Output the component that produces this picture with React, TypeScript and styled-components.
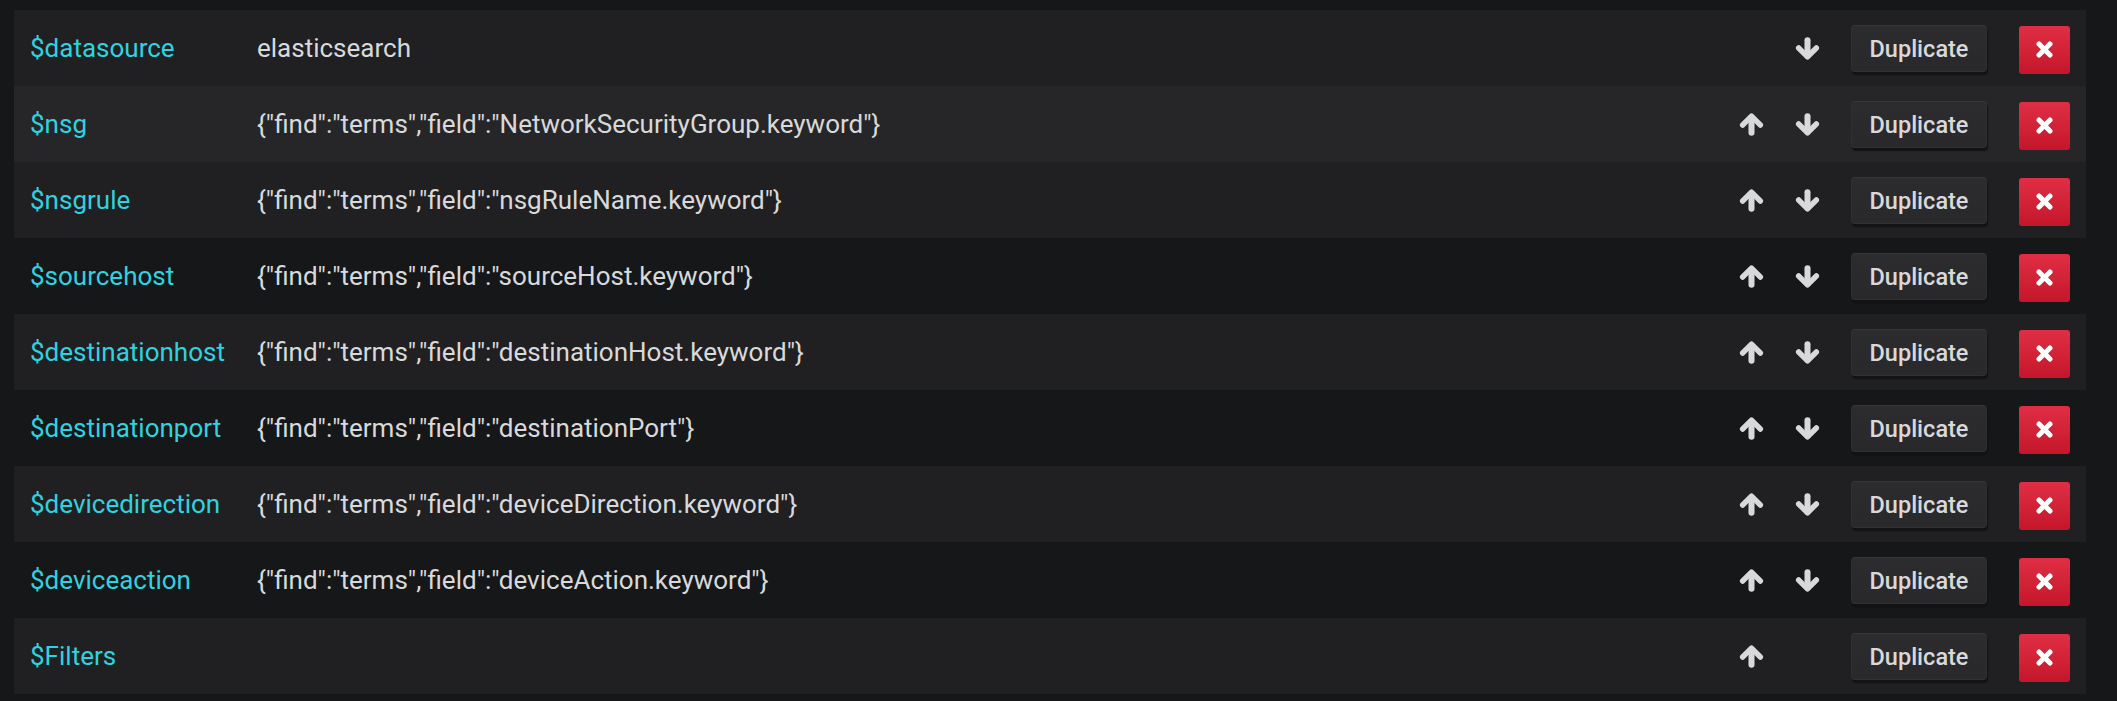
import React from "react";
import styled, { createGlobalStyle } from "styled-components";

const GlobalStyle = createGlobalStyle`
  html, body {
    margin: 0;
    padding: 0;
    background: #161719;
  }
  body {
    font-family: Roboto, "Noto Sans", "Liberation Sans", sans-serif;
    color: #d8d9da;
  }
`;

const Page = styled.div`
  background: #161719;
  padding: 10px 31px 7px 14px;
  min-height: 701px;
  box-sizing: border-box;
`;

const Table = styled.div`
  display: flex;
  flex-direction: column;
`;

const Row = styled.div<{ $striped: boolean; $hover?: boolean }>`
  display: grid;
  grid-template-columns: 227px 1fr 57px 55px 168px 83px;
  align-items: center;
  height: 76px;
  background: ${(p) => (p.$hover ? "#262628" : p.$striped ? "#202022" : "transparent")};
`;

const NameCell = styled.div`
  padding-left: 16px;
  font-size: 26px;
  color: #32d1df;
  white-space: nowrap;
`;

const ValueCell = styled.div`
  padding-left: 16px;
  font-size: 26px;
  color: #d8d9da;
  white-space: nowrap;
  overflow: hidden;
`;

const IconCell = styled.div`
  display: flex;
  align-items: center;
  justify-content: center;
  color: #d8d9da;
`;

const ButtonCell = styled.div`
  display: flex;
  align-items: center;
  padding-left: 16px;
`;

const DuplicateButton = styled.button`
  box-sizing: border-box;
  width: 136px;
  height: 47px;
  margin-top: 1px;
  border-radius: 4px;
  border: 1px solid #303034;
  border-top-color: #37373b;
  background: linear-gradient(to bottom, #2c2c2f, #29292c);
  box-shadow: 1px 3px 1px #121214;
  color: #d8d9da;
  font-family: Roboto, "Noto Sans", sans-serif;
  font-weight: 500;
  font-size: 23.5px;
  padding: 0;
  display: flex;
  align-items: center;
  justify-content: center;
`;

const DeleteButton = styled.button`
  box-sizing: border-box;
  width: 51px;
  height: 48px;
  margin-top: 3px;
  border: none;
  border-radius: 3px;
  background: linear-gradient(to bottom, #e02f44, #c4162a);
  display: flex;
  align-items: center;
  justify-content: center;
  padding: 0;
`;

const Arrow = ({ dir }: { dir: "up" | "down" }) => (
  <svg
    width="25"
    height="23"
    viewBox="0 0 24 22"
    style={{ transform: dir === "down" ? "rotate(180deg)" : undefined }}
  >
    <g fill="none" stroke="#d8d9da" strokeLinecap="round" strokeLinejoin="round">
      <polyline points="3.5,11.5 12,3 20.5,11.5" strokeWidth="5.2" />
      <line x1="12" y1="4" x2="12" y2="19" strokeWidth="5.8" />
    </g>
  </svg>
);

const Times = () => (
  <svg width="17" height="17" viewBox="0 0 17 17">
    <g stroke="#ffffff" strokeWidth="5" strokeLinecap="round">
      <line x1="3" y1="3" x2="14" y2="14" />
      <line x1="14" y1="3" x2="3" y2="14" />
    </g>
  </svg>
);

type Variable = { name: string; query: string };

const variables: Variable[] = [
  { name: "$datasource", query: "elasticsearch" },
  { name: "$nsg", query: '{"find":"terms","field":"NetworkSecurityGroup.keyword"}' },
  { name: "$nsgrule", query: '{"find":"terms","field":"nsgRuleName.keyword"}' },
  { name: "$sourcehost", query: '{"find":"terms","field":"sourceHost.keyword"}' },
  { name: "$destinationhost", query: '{"find":"terms","field":"destinationHost.keyword"}' },
  { name: "$destinationport", query: '{"find":"terms","field":"destinationPort"}' },
  { name: "$devicedirection", query: '{"find":"terms","field":"deviceDirection.keyword"}' },
  { name: "$deviceaction", query: '{"find":"terms","field":"deviceAction.keyword"}' },
  { name: "$Filters", query: "" },
];

export default function App() {
  return (
    <>
      <GlobalStyle />
      <Page>
        <Table>
          {variables.map((v, i) => (
            <Row key={v.name} $striped={i % 2 === 0} $hover={i === 1}>
              <NameCell>{v.name}</NameCell>
              <ValueCell>{v.query}</ValueCell>
              <IconCell>{i > 0 && <Arrow dir="up" />}</IconCell>
              <IconCell>{i < variables.length - 1 && <Arrow dir="down" />}</IconCell>
              <ButtonCell>
                <DuplicateButton>Duplicate</DuplicateButton>
              </ButtonCell>
              <ButtonCell>
                <DeleteButton>
                  <Times />
                </DeleteButton>
              </ButtonCell>
            </Row>
          ))}
        </Table>
      </Page>
    </>
  );
}
